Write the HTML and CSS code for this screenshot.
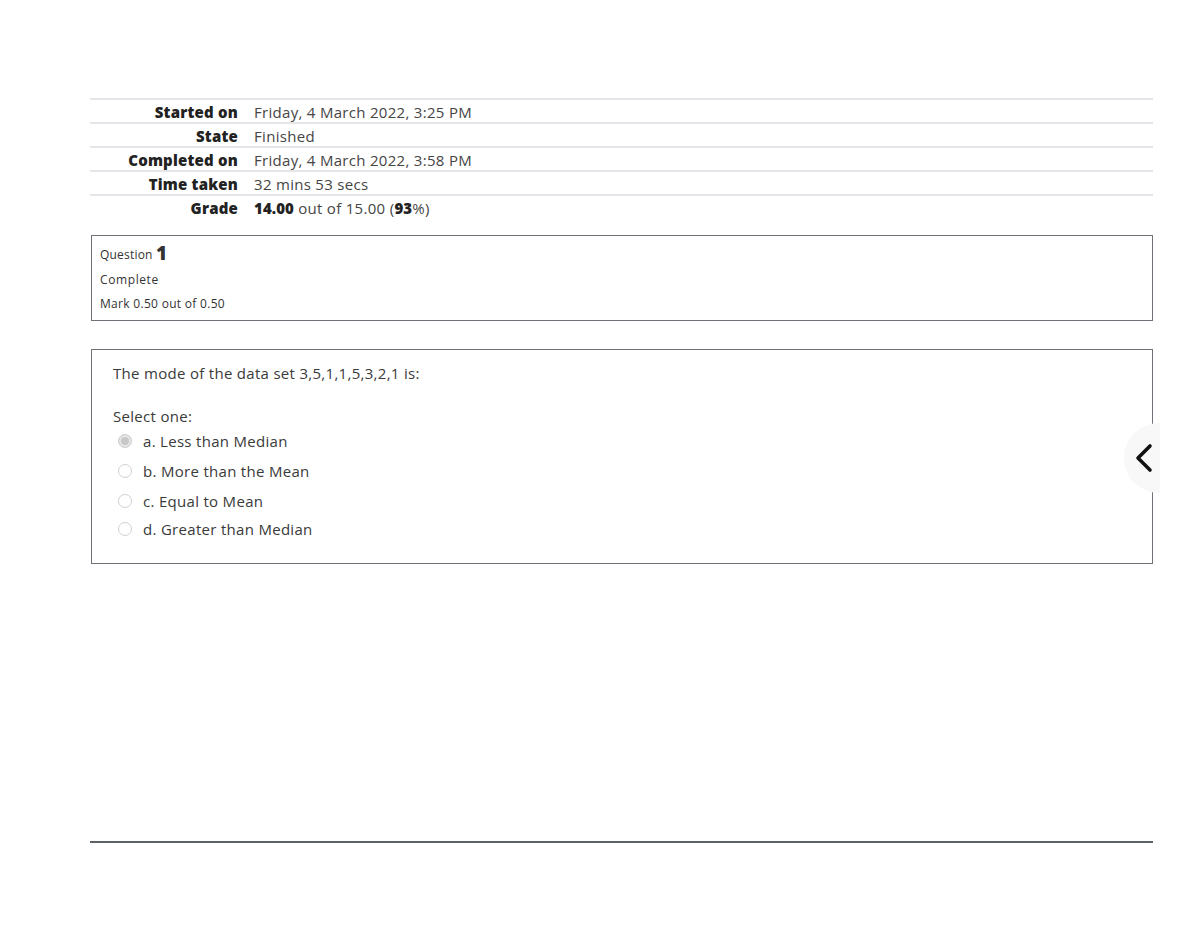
FILE: index.html
```html
<!DOCTYPE html>
<html>
<head>
<meta charset="utf-8">
<link rel="stylesheet" href="styles.css">
</head>
<body>
<div class="page">
  <table class="summary">
    <tr><th>Started on</th><td>Friday, 4 March 2022, 3:25 PM</td></tr>
    <tr><th>State</th><td>Finished</td></tr>
    <tr><th>Completed on</th><td>Friday, 4 March 2022, 3:58 PM</td></tr>
    <tr><th>Time taken</th><td>32 mins 53 secs</td></tr>
    <tr><th>Grade</th><td><b>14.00</b> out of 15.00 (<b>93</b>%)</td></tr>
  </table>

  <div class="info">
    <div class="qno">Question <span class="num">1</span></div>
    <div class="state">Complete</div>
    <div class="grade">Mark 0.50 out of 0.50</div>
  </div>

  <div class="content">
    <p class="qtext">The mode of the data set 3,5,1,1,5,3,2,1 is:</p>
    <p class="prompt">Select one:</p>
    <div class="answers">
      <div class="opt opt-a"><span class="radio checked"></span><span>a. Less than Median</span></div>
      <div class="opt opt-b"><span class="radio"></span><span>b. More than the Mean</span></div>
      <div class="opt opt-c"><span class="radio"></span><span>c. Equal to Mean</span></div>
      <div class="opt opt-d"><span class="radio"></span><span>d. Greater than Median</span></div>
    </div>
    <div class="drawer-toggle">
      <svg width="20" height="30" viewBox="0 0 20 30"><path d="M16 3 L4 15 L16 27" fill="none" stroke="#111" stroke-width="3.6" stroke-linecap="round" stroke-linejoin="round"/></svg>
    </div>
  </div>

  <div class="footer-line"></div>
</div>
</body>
</html>
```
FILE: styles.css
```css
html, body {
  margin: 0;
  padding: 0;
  background: #fff;
}
body {
  font-family: "Open Sans", "Noto Sans", sans-serif;
  color: #3d3d3d;
}
.page {
  width: 1063px;
  margin-left: 90px;
  padding-top: 98px;
}
.summary {
  width: 100%;
  border-collapse: collapse;
  font-size: 15px;
}
.summary tr {
  border-top: 2px solid #e3e5e8;
}
.summary th {
  width: 148px;
  text-align: right;
  font-weight: 800;
  color: #222;
  padding: 2px 8px 0 0;
  height: 20px;
  line-height: 20px;
  letter-spacing: 0.2px;
}
.summary td {
  padding: 2px 0 0 8px;
  height: 20px;
  line-height: 20px;
  color: #454545;
  letter-spacing: 0.3px;
}
.summary td b {
  font-weight: 800;
  color: #222;
  letter-spacing: 0.1px;
}
.info {
  margin-top: 17px;
  margin-left: 1px;
  width: 1062px;
  border: 1px solid #6d7378;
  padding: 4px 0 6px 8px;
  box-sizing: border-box;
  height: 86px;
  font-size: 12px;
  color: #333;
  letter-spacing: 0.2px;
}
.qno {
  height: 24px;
  line-height: 24px;
  margin-top: 1px;
}
.qno .num {
  font-size: 19px;
  font-weight: 800;
  vertical-align: -1px;
}
.state {
  margin-top: 3px;
  line-height: 24px;
  letter-spacing: 0.6px;
}
.grade {
  line-height: 24px;
  letter-spacing: 0.3px;
}
.content {
  position: relative;
  margin-top: 28px;
  margin-left: 1px;
  width: 1062px;
  height: 215px;
  box-sizing: border-box;
  border: 1px solid #6d7378;
  padding: 12px 0 0 21px;
  font-size: 15px;
  color: #3a3a3a;
  letter-spacing: 0.3px;
}
.qtext {
  margin: 0;
  line-height: 22px;
}
.prompt {
  margin: 21px 0 0 0;
  line-height: 22px;
}
.answers {
  display: flex;
  flex-direction: column;
}
.opt {
  display: flex;
  align-items: center;
  gap: 11px;
  height: 30px;
  margin-left: 5px;
}
.opt-a { height: 28px; }
.opt-b { height: 31px; }
.opt-c { height: 29px; }
.opt-d { height: 28px; }
.radio {
  width: 12px;
  height: 12px;
  border: 1px solid #cfd2d4;
  border-radius: 50%;
  background: #fff;
  box-sizing: content-box;
}
.radio.checked {
  background: #c8c8c8;
  box-shadow: inset 0 0 0 2px #e8e8e8;
  border-color: #d0d0d0;
}
.drawer-toggle {
  position: absolute;
  right: -8px;
  top: 73px;
  width: 36px;
  height: 70px;
  background: #f8f8f8;
  border-radius: 35px 0 0 35px;
  display: flex;
  align-items: center;
  justify-content: center;
}
.drawer-toggle svg {
  margin-left: 4px;
}
.footer-line {
  margin-top: 277px;
  height: 2px;
  background: #5d6266;
  width: 1063px;
}
```
